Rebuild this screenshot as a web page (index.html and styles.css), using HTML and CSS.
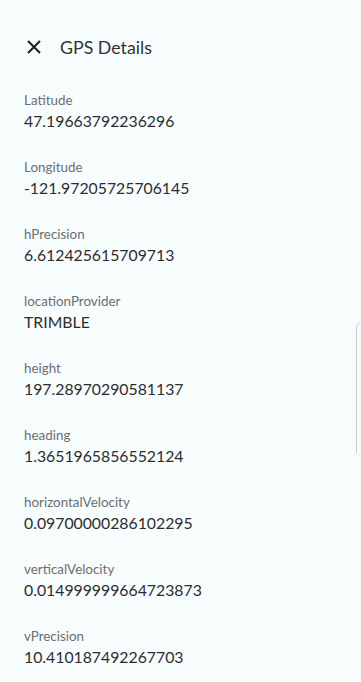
FILE: index.html
```html
<!DOCTYPE html>
<html>
<head>
<meta charset="utf-8">
<link rel="stylesheet" href="styles.css">
</head>
<body>
<div class="screen">
  <header class="header">
    <svg class="close" width="14" height="14" viewBox="0 0 14 14"><path d="M1 1L13 13M13 1L1 13" stroke="#1e1e1e" stroke-width="2" fill="none"/></svg>
    <span class="title">GPS Details</span>
  </header>
  <main class="list">
    <div class="item"><div class="label">Latitude</div><div class="value">47.19663792236296</div></div>
    <div class="item"><div class="label">Longitude</div><div class="value">-121.97205725706145</div></div>
    <div class="item"><div class="label">hPrecision</div><div class="value">6.612425615709713</div></div>
    <div class="item"><div class="label">locationProvider</div><div class="value">TRIMBLE</div></div>
    <div class="item"><div class="label">height</div><div class="value">197.28970290581137</div></div>
    <div class="item"><div class="label">heading</div><div class="value">1.3651965856552124</div></div>
    <div class="item"><div class="label">horizontalVelocity</div><div class="value">0.09700000286102295</div></div>
    <div class="item"><div class="label">verticalVelocity</div><div class="value">0.014999999664723873</div></div>
    <div class="item"><div class="label">vPrecision</div><div class="value">10.410187492267703</div></div>
  </main>
  <div class="edge-handle"></div>
</div>
</body>
</html>
```
FILE: styles.css
```css
html, body {
  margin: 0;
  padding: 0;
  background: #f7fcfd;
}
.screen {
  position: relative;
  width: 361px;
  height: 682px;
  overflow: hidden;
  font-family: Lato, "Open Sans", sans-serif;
  color: #2b2b2b;
}
.header {
  display: flex;
  align-items: center;
  height: 22px;
  padding: 36px 0 0 27px;
  margin-bottom: 33px;
}
.close {
  display: block;
  width: 14px;
  height: 14px;
}
.title {
  margin-left: 19px;
  font-size: 17.8px;
  line-height: 22px;
  color: #333;
}
.list {
  padding-left: 24px;
}
.item {
  height: 67px;
}
.label {
  font-size: 13.4px;
  line-height: 18px;
  color: #6e6e6e;
}
.value {
  margin-top: 1px;
  font-size: 15.8px;
  line-height: 22px;
  color: #2d2d2d;
}
.edge-handle {
  position: absolute;
  left: 356px;
  top: 322px;
  width: 10px;
  height: 130px;
  border-left: 1.5px solid #c9cccd;
  border-top: 1px solid #d4d7d8;
  border-top-left-radius: 6px;
}
```
